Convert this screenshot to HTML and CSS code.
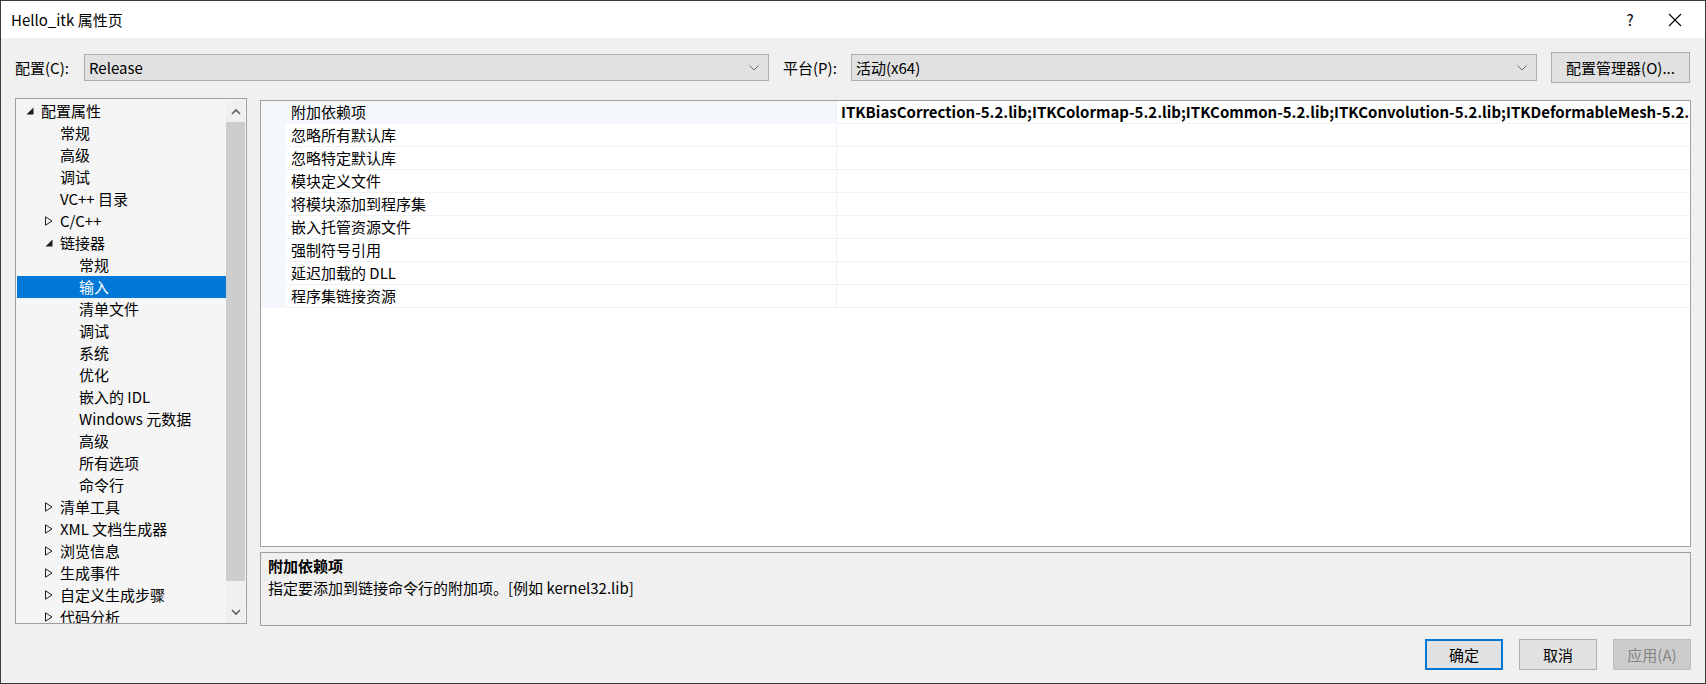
FILE: index.html
```html
<!DOCTYPE html>
<html lang="zh">
<head>
<meta charset="utf-8">
<title>Hello_itk 属性页</title>
<link rel="stylesheet" href="styles.css">
</head>
<body>
<div class="window">
  <div class="titlebar">
    <span class="title">Hello_itk 属性页</span>
    <div class="tb-buttons">
      <span class="help">?</span>
      <svg class="close" width="14" height="14" viewBox="0 0 14 14"><path d="M1 1L13 13M13 1L1 13" stroke="#000" stroke-width="1.1" fill="none"/></svg>
    </div>
  </div>
  <div class="content">
    <div class="config-row">
      <span class="lbl lbl-config">配置(C):</span>
      <div class="combo combo-config"><span>Release</span>
        <svg class="chev" width="10" height="6" viewBox="0 0 10 6"><path d="M0.5 0.5L5 5L9.5 0.5" stroke="#6d6d6d" fill="none" stroke-width="1"/></svg>
      </div>
      <span class="lbl lbl-platform">平台(P):</span>
      <div class="combo combo-platform"><span>活动(x64)</span>
        <svg class="chev" width="10" height="6" viewBox="0 0 10 6"><path d="M0.5 0.5L5 5L9.5 0.5" stroke="#6d6d6d" fill="none" stroke-width="1"/></svg>
      </div>
      <button class="btn btn-manager">配置管理器(O)...</button>
    </div>
    <div class="main">
      <div class="tree">
        <ul class="tree-list">
          <li class="row l0"><span class="arrow"><svg width="8" height="8" viewBox="0 0 8 8"><path d="M7.5 0.5V7.5H0.5Z" fill="#1e1e1e"/></svg></span>配置属性</li>
          <li class="row l1"><span class="arrow"></span>常规</li>
          <li class="row l1"><span class="arrow"></span>高级</li>
          <li class="row l1"><span class="arrow"></span>调试</li>
          <li class="row l1"><span class="arrow"></span>VC++ 目录</li>
          <li class="row l1"><span class="arrow"><svg width="8" height="10" viewBox="0 0 8 10"><path d="M0.5 0.8V9.2L7 5Z" fill="none" stroke="#1e1e1e" stroke-width="1"/></svg></span>C/C++</li>
          <li class="row l1"><span class="arrow"><svg width="8" height="8" viewBox="0 0 8 8"><path d="M7.5 0.5V7.5H0.5Z" fill="#1e1e1e"/></svg></span>链接器</li>
          <li class="row l2"><span class="arrow"></span>常规</li>
          <li class="row l2 selected"><span class="arrow"></span>输入</li>
          <li class="row l2"><span class="arrow"></span>清单文件</li>
          <li class="row l2"><span class="arrow"></span>调试</li>
          <li class="row l2"><span class="arrow"></span>系统</li>
          <li class="row l2"><span class="arrow"></span>优化</li>
          <li class="row l2"><span class="arrow"></span>嵌入的 IDL</li>
          <li class="row l2"><span class="arrow"></span>Windows 元数据</li>
          <li class="row l2"><span class="arrow"></span>高级</li>
          <li class="row l2"><span class="arrow"></span>所有选项</li>
          <li class="row l2"><span class="arrow"></span>命令行</li>
          <li class="row l1"><span class="arrow"><svg width="8" height="10" viewBox="0 0 8 10"><path d="M0.5 0.8V9.2L7 5Z" fill="none" stroke="#1e1e1e" stroke-width="1"/></svg></span>清单工具</li>
          <li class="row l1"><span class="arrow"><svg width="8" height="10" viewBox="0 0 8 10"><path d="M0.5 0.8V9.2L7 5Z" fill="none" stroke="#1e1e1e" stroke-width="1"/></svg></span>XML 文档生成器</li>
          <li class="row l1"><span class="arrow"><svg width="8" height="10" viewBox="0 0 8 10"><path d="M0.5 0.8V9.2L7 5Z" fill="none" stroke="#1e1e1e" stroke-width="1"/></svg></span>浏览信息</li>
          <li class="row l1"><span class="arrow"><svg width="8" height="10" viewBox="0 0 8 10"><path d="M0.5 0.8V9.2L7 5Z" fill="none" stroke="#1e1e1e" stroke-width="1"/></svg></span>生成事件</li>
          <li class="row l1"><span class="arrow"><svg width="8" height="10" viewBox="0 0 8 10"><path d="M0.5 0.8V9.2L7 5Z" fill="none" stroke="#1e1e1e" stroke-width="1"/></svg></span>自定义生成步骤</li>
          <li class="row l1"><span class="arrow"><svg width="8" height="10" viewBox="0 0 8 10"><path d="M0.5 0.8V9.2L7 5Z" fill="none" stroke="#1e1e1e" stroke-width="1"/></svg></span>代码分析</li>
        </ul>
        <div class="scrollbar">
          <div class="sb-btn"><svg width="10" height="7" viewBox="0 0 10 7"><path d="M1 6L5 2L9 6" stroke="#606060" stroke-width="1.6" fill="none"/></svg></div>
          <div class="sb-thumb"></div>
          <div class="sb-track"></div>
          <div class="sb-btn"><svg width="10" height="7" viewBox="0 0 10 7"><path d="M1 1L5 5L9 1" stroke="#606060" stroke-width="1.6" fill="none"/></svg></div>
        </div>
      </div>
      <div class="right">
        <div class="grid">
          <div class="grow active"><span class="gutter"></span><span class="gname">附加依赖项</span><span class="gval">ITKBiasCorrection-5.2.lib;ITKColormap-5.2.lib;ITKCommon-5.2.lib;ITKConvolution-5.2.lib;ITKDeformableMesh-5.2.lib;ITKDICOMParser-5.2.lib</span></div>
          <div class="grow"><span class="gutter"></span><span class="gname">忽略所有默认库</span><span class="gval"></span></div>
          <div class="grow"><span class="gutter"></span><span class="gname">忽略特定默认库</span><span class="gval"></span></div>
          <div class="grow"><span class="gutter"></span><span class="gname">模块定义文件</span><span class="gval"></span></div>
          <div class="grow"><span class="gutter"></span><span class="gname">将模块添加到程序集</span><span class="gval"></span></div>
          <div class="grow"><span class="gutter"></span><span class="gname">嵌入托管资源文件</span><span class="gval"></span></div>
          <div class="grow"><span class="gutter"></span><span class="gname">强制符号引用</span><span class="gval"></span></div>
          <div class="grow"><span class="gutter"></span><span class="gname">延迟加载的 DLL</span><span class="gval"></span></div>
          <div class="grow"><span class="gutter"></span><span class="gname">程序集链接资源</span><span class="gval"></span></div>
        </div>
        <div class="desc">
          <div class="desc-title">附加依赖项</div>
          <div class="desc-text">指定要添加到链接命令行的附加项。[例如 kernel32.lib]</div>
        </div>
      </div>
    </div>
    <div class="footer">
      <button class="btn btn-ok">确定</button>
      <button class="btn btn-cancel">取消</button>
      <button class="btn btn-apply" disabled>应用(A)</button>
    </div>
  </div>
</div>
</body>
</html>
```

FILE: styles.css
```css
* { box-sizing: border-box; }
html, body { margin: 0; padding: 0; }
body {
  width: 1706px;
  height: 684px;
  overflow: hidden;
  background: #2d2d2d;
  font-family: "Noto Sans CJK SC", "Noto Sans", sans-serif;
  font-size: 15px;
  color: #000;
}
.window {
  width: 1706px;
  height: 684px;
  border: 1px solid #3a3a3a;
  background: #f0f0f0;
  display: flex;
  flex-direction: column;
}
.titlebar {
  height: 37px;
  background: #fff;
  display: flex;
  align-items: center;
  justify-content: space-between;
  padding-left: 10px;
}
.title { font-size: 15px; line-height: 20px; margin-top: 1px; }
.tb-buttons { display: flex; align-items: center; height: 100%; }
.help { font-size: 15px; width: 58px; text-align: center; }
.close { margin: 0 23px 0 9px; }
.content {
  flex: 1;
  display: flex;
  flex-direction: column;
  padding: 14px 14px 0 14px;
}
.config-row {
  display: flex;
  align-items: center;
  height: 31px;
}
.lbl { line-height: 20px; white-space: nowrap; }
.lbl-config { width: 69px; }
.lbl-platform { width: 68px; margin-left: 14px; }
.combo {
  height: 27px;
  background: #e1e1e1;
  border: 1px solid #adadad;
  display: flex;
  align-items: center;
  justify-content: space-between;
  padding: 0 9px 0 4px;
}
.combo span { line-height: 20px; }
.combo-config { width: 685px; }
.combo-platform { width: 686px; }
.btn {
  font-family: inherit;
  font-size: 15px;
  color: #000;
  background: #e1e1e1;
  border: 1px solid #adadad;
  padding: 0;
  margin: 0;
}
.btn-manager { width: 139px; height: 31px; margin-left: 14px; }
.main {
  display: flex;
  align-items: flex-start;
  margin-top: 15px;
}
.tree {
  width: 233px;
  height: 526px;
  border: 1px solid #a0a0a0;
  background: #f5f5f5;
  display: flex;
  padding: 1px 1px 0 1px;
  overflow: hidden;
}
.tree-list {
  list-style: none;
  margin: 0;
  padding: 0;
  width: 209px;
  overflow: hidden;
  height: 523px;
}
.row {
  height: 22px;
  line-height: 22px;
  display: flex;
  align-items: center;
  white-space: nowrap;
}
.row.l0 { padding-left: 5px; }
.row.l1 { padding-left: 24px; }
.row.l2 { padding-left: 43px; }
.row.selected { background: #0078d7; color: #fff; }
.arrow {
  width: 19px;
  height: 22px;
  display: flex;
  align-items: center;
  padding-left: 4px;
  flex-shrink: 0;
}
.scrollbar {
  width: 19px;
  display: flex;
  flex-direction: column;
  background: #f0f0f0;
  height: 523px;
}
.sb-btn {
  height: 22px;
  display: flex;
  align-items: center;
  justify-content: center;
}
.sb-thumb { height: 459px; background: #cdcdcd; }
.sb-track { flex: 1; }
.right {
  margin-left: 13px;
  margin-top: 2px;
  width: 1431px;
  display: flex;
  flex-direction: column;
}
.grid {
  height: 447px;
  border: 1px solid #a0a0a0;
  background: #fff;
  overflow: hidden;
}
.grow {
  display: flex;
  height: 23px;
}
.gutter {
  width: 25px;
  flex-shrink: 0;
  background: #f4f7fc;
}
.gname {
  width: 551px;
  flex-shrink: 0;
  padding-left: 5px;
  line-height: 22px;
  border-bottom: 1px solid #eef1f5;
  border-right: 1px solid #eef1f5;
  white-space: nowrap;
}
.gval {
  flex: 1;
  padding-left: 4px;
  line-height: 22px;
  border-bottom: 1px solid #eef1f5;
  white-space: nowrap;
  overflow: hidden;
  font-weight: bold;
}
.grow.active .gname { background: #f4f7fc; border-bottom-color: #f4f7fc; }
.desc {
  margin-top: 5px;
  height: 74px;
  border: 1px solid #a0a0a0;
  background: #f0f0f0;
  padding: 2px 0 0 7px;
}
.desc-title { font-weight: bold; line-height: 22px; }
.desc-text { line-height: 22px; }
.footer {
  display: flex;
  justify-content: flex-end;
  gap: 16px;
  margin-top: 13px;
}
.footer .btn { width: 78px; height: 31px; }
.btn-ok { border: 2px solid #0078d7; }
.btn-apply { background: #cccccc; border-color: #bfbfbf; color: #838383; }
```
